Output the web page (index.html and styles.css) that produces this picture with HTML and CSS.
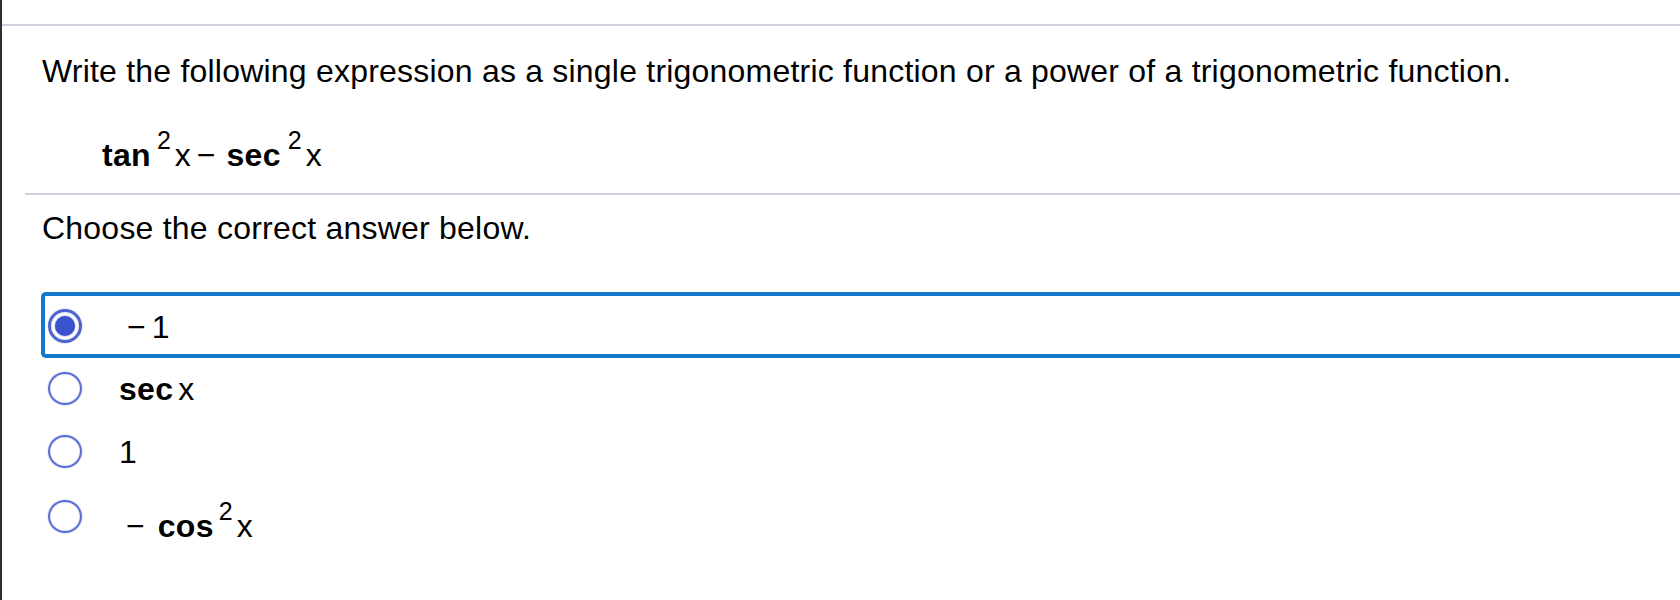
FILE: index.html
```html
<!DOCTYPE html>
<html lang="en">
<head>
<meta charset="utf-8">
<title>Trig question</title>
<link rel="stylesheet" href="styles.css">
</head>
<body>
<div class="page">
  <div class="top-rule"></div>
  <div class="question">
    <p class="prompt">Write the following expression as a single trigonometric function or a power of a trigonometric function.</p>
    <p class="expr"><span class="fn fn-tan">tan</span><sup class="sq sq-a">2</sup><span class="var var-a">x</span><span class="op op-a">−</span><span class="fn fn-sec">sec</span><sup class="sq sq-b">2</sup><span class="var var-b">x</span></p>
  </div>
  <div class="mid-rule"></div>
  <div class="answers">
    <p class="instr">Choose the correct answer below.</p>
    <ul class="options">
      <li class="option selected">
        <span class="radio checked"></span>
        <span class="label"><span class="neg neg-one">−</span>1</span>
      </li>
      <li class="option">
        <span class="radio"></span>
        <span class="label"><span class="fn">sec</span><span class="var var-sec">x</span></span>
      </li>
      <li class="option">
        <span class="radio"></span>
        <span class="label">1</span>
      </li>
      <li class="option last">
        <span class="radio"></span>
        <span class="label"><span class="neg neg-cos">−</span><span class="fn">cos</span><sup class="sq sq-c">2</sup><span class="var var-c">x</span></span>
      </li>
    </ul>
  </div>
</div>
</body>
</html>
```
FILE: styles.css
```css
html, body {
  margin: 0;
  padding: 0;
  background: #ffffff;
}

body {
  font-family: "Liberation Sans", Arial, sans-serif;
  color: #000000;
  font-size: 32px;
  line-height: 36px;
  overflow: hidden;
}

.page {
  border-left: 2px solid #2e2e2e;
  height: 600px;
  box-sizing: border-box;
  overflow: hidden;
}

.top-rule {
  margin-top: 24px;
  height: 2px;
  background: #cfd2de;
}

.question {
  padding-left: 40px;
}

.prompt {
  margin: 27px 0 0 0;
  white-space: nowrap;
  letter-spacing: 0.21px;
}

.expr {
  margin: 39px 0 0 60px;
  white-space: nowrap;
}

.fn {
  font-weight: bold;
  letter-spacing: 0.3px;
}

.sq {
  font-size: 25px;
  line-height: 25px;
  vertical-align: 17px;
}

.sq-a { margin-left: 6px; }
.var-a { margin-left: 4px; }
.op-a { margin-left: 6px; }
.fn-sec { margin-left: 11px; }
.sq-b { margin-left: 7px; }
.var-b { margin-left: 4px; }

.mid-rule {
  margin: 20px 0 0 23px;
  height: 2px;
  background: #cfd2de;
}

.answers {
  padding-left: 40px;
}

.instr {
  margin: 15px 0 0 0;
  letter-spacing: 0.22px;
}

.options {
  list-style: none;
  margin: 46px -40px 0 -1px;
  padding: 0;
}

.option {
  display: flex;
  align-items: flex-start;
  padding: 13px 0 14px 7px;
}

.option.selected {
  border: 4px solid #1577c9;
  border-right: none;
  border-radius: 5px 0 0 5px;
  padding: 13px 0 9px 3px;
}

.option.last {
  margin-top: 2px;
}

.radio {
  flex: none;
  width: 34px;
  height: 33px;
  box-sizing: border-box;
  border: 2.5px solid #5a6ed3;
  border-radius: 50%;
  margin-top: 1px;
  box-shadow: 0 0 1px 0.5px rgba(130, 148, 228, 0.4), inset 0 0 1px 0.5px rgba(130, 148, 228, 0.4);
  display: flex;
  align-items: center;
  justify-content: center;
}

.radio.checked {
  height: 34px;
  margin-top: 0;
  border-width: 3px;
  border-color: #4d63cf;
}

.radio.checked::after {
  content: "";
  width: 20px;
  height: 20px;
  border-radius: 50%;
  background: #3a52cb;
  box-shadow: 0 0 1px 0.5px rgba(90, 110, 215, 0.5);
}

.label {
  margin-left: 37px;
  white-space: nowrap;
}

.neg-one {
  margin-left: 8px;
  margin-right: 6px;
}

.neg-cos {
  margin-left: 7px;
  margin-right: 13px;
}

.var-sec { margin-left: 5px; }
.sq-c { margin-left: 5px; }
.var-c { margin-left: 4px; }
```
